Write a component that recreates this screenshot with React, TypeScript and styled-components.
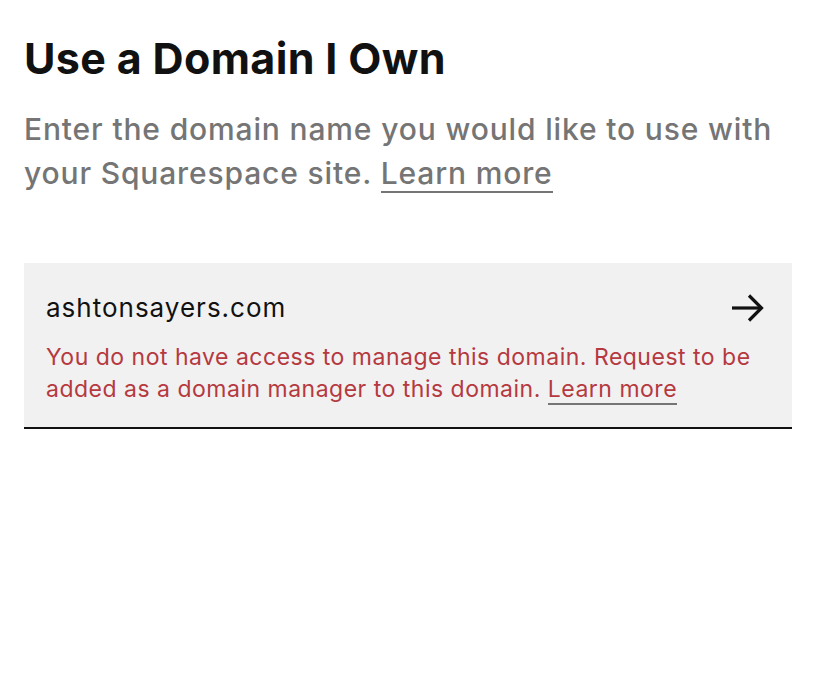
import React from 'react';
import styled, { createGlobalStyle } from 'styled-components';

const GlobalStyle = createGlobalStyle`
  body {
    margin: 0;
    background: #ffffff;
    font-family: Inter, "Liberation Sans", sans-serif;
    -webkit-font-smoothing: antialiased;
  }
`;

const Page = styled.div`
  padding: 32px 42px 0 24px;
`;

const Title = styled.h1`
  margin: 0;
  font-size: 43px;
  font-weight: 700;
  line-height: 52px;
  letter-spacing: 0.35px;
  color: #111111;
`;

const Subtitle = styled.p`
  margin: 23px 0 0;
  font-size: 30px;
  line-height: 44px;
  font-weight: 500;
  letter-spacing: 0.85px;
  color: #757575;
`;

const Link = styled.a`
  color: inherit;
  text-decoration: none;
  border-bottom: 2px solid #757575;
  cursor: pointer;
`;

const DomainBox = styled.div`
  margin-top: 68px;
  background: #f1f1f1;
  border-bottom: 2px solid #111111;
  padding: 29px 28px 22px 22px;
`;

const DomainRow = styled.div`
  display: flex;
  align-items: center;
  justify-content: space-between;
  height: 32px;
`;

const DomainName = styled.div`
  font-size: 26px;
  line-height: 32px;
  letter-spacing: 1px;
  color: #111111;
`;

const ArrowButton = styled.button`
  border: none;
  background: none;
  padding: 0;
  display: flex;
  cursor: pointer;
  color: #111111;
`;

const ErrorText = styled.p`
  margin: 17px 0 0;
  font-size: 23px;
  line-height: 32px;
  letter-spacing: 0.5px;
  color: #b5393f;
`;

export default function App() {
  return (
    <>
      <GlobalStyle />
      <Page>
        <Title>Use a Domain I Own</Title>
        <Subtitle>
          Enter the domain name you would like to use with your Squarespace site.{' '}
          <Link>Learn more</Link>
        </Subtitle>
        <DomainBox>
          <DomainRow>
            <DomainName>ashtonsayers.com</DomainName>
            <ArrowButton aria-label="Continue">
              <svg width="32" height="28" viewBox="0 0 32 28" fill="none" stroke="currentColor" strokeWidth="3.2">
                <path d="M0 14 H30" />
                <path d="M17 1.5 L29.5 14 L17 26.5" />
              </svg>
            </ArrowButton>
          </DomainRow>
          <ErrorText>
            You do not have access to manage this domain. Request to be added as a domain manager to this domain.{' '}
            <Link>Learn more</Link>
          </ErrorText>
        </DomainBox>
      </Page>
    </>
  );
}
